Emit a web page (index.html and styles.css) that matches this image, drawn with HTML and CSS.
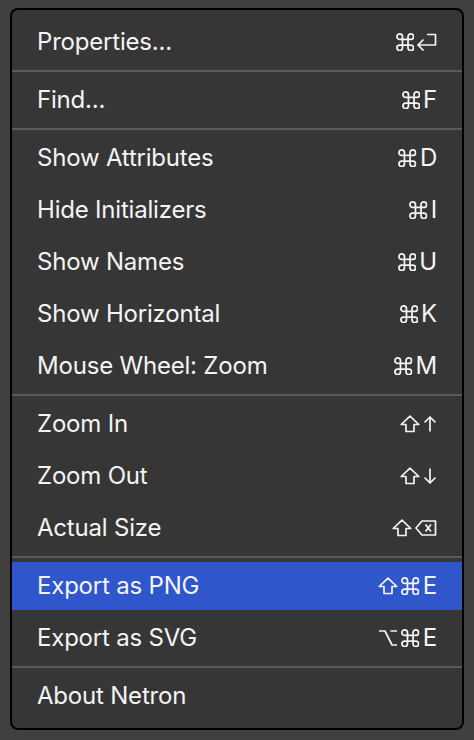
FILE: index.html
```html
<!DOCTYPE html>
<html lang="en">
<head>
  <meta charset="UTF-8">
  <meta name="viewport" content="width=device-width, initial-scale=1.0">
  <title>Netron menu</title>
  <link rel="stylesheet" href="styles.css">
</head>
<body>

<svg class="sprite" xmlns="http://www.w3.org/2000/svg">
  <symbol id="cmd" viewBox="2 2 20 20">
    <path d="M6 9A3 3 0 1 1 9 6V18A3 3 0 1 1 6 15H18A3 3 0 1 1 15 18V6A3 3 0 1 1 18 9Z"/>
  </symbol>
  <symbol id="ret" viewBox="0 0 20 18">
    <path d="M10 1.5H18.5V12H1.5M6.5 6.5L1 12L6.5 17.5"/>
  </symbol>
  <symbol id="shift" viewBox="0 0 20 18">
    <path d="M10 1.2L18.8 9.5H14V16.5H6V9.5H1.2Z"/>
  </symbol>
  <symbol id="up" viewBox="0 0 14 16">
    <path d="M7 1V15.5M1.5 6.5L7 1L12.5 6.5"/>
  </symbol>
  <symbol id="down" viewBox="0 0 14 16">
    <path d="M7 15V0.5M1.5 9.5L7 15L12.5 9.5"/>
  </symbol>
  <symbol id="del" viewBox="0 0 22 16">
    <path d="M7 1H20.5V15H7L1 8Z M10.5 4.5L16 11.5M16 4.5L10.5 11.5"/>
  </symbol>
  <symbol id="opt" viewBox="0 0 20 18">
    <path d="M1 2H7L14 16H19M12.5 2H19"/>
  </symbol>
</svg>

<div class="menu">
  <div class="item"><span>Properties...</span><span class="keys"><svg class="k-cmd"><use href="#cmd"/></svg><svg class="k-ret"><use href="#ret"/></svg></span></div>
  <div class="sep"></div>
  <div class="item"><span>Find...</span><span class="keys"><svg class="k-cmd"><use href="#cmd"/></svg><span>F</span></span></div>
  <div class="sep"></div>
  <div class="item"><span>Show Attributes</span><span class="keys"><svg class="k-cmd"><use href="#cmd"/></svg><span>D</span></span></div>
  <div class="item"><span>Hide Initializers</span><span class="keys"><svg class="k-cmd"><use href="#cmd"/></svg><span>I</span></span></div>
  <div class="item"><span>Show Names</span><span class="keys"><svg class="k-cmd"><use href="#cmd"/></svg><span>U</span></span></div>
  <div class="item"><span>Show Horizontal</span><span class="keys"><svg class="k-cmd"><use href="#cmd"/></svg><span>K</span></span></div>
  <div class="item"><span>Mouse Wheel: Zoom</span><span class="keys"><svg class="k-cmd"><use href="#cmd"/></svg><span>M</span></span></div>
  <div class="sep"></div>
  <div class="item"><span>Zoom In</span><span class="keys"><svg class="k-shift"><use href="#shift"/></svg><svg class="k-arrow"><use href="#up"/></svg></span></div>
  <div class="item"><span>Zoom Out</span><span class="keys"><svg class="k-shift"><use href="#shift"/></svg><svg class="k-arrow"><use href="#down"/></svg></span></div>
  <div class="item"><span>Actual Size</span><span class="keys"><svg class="k-shift"><use href="#shift"/></svg><svg class="k-del"><use href="#del"/></svg></span></div>
  <div class="sep"></div>
  <div class="item active"><span>Export as PNG</span><span class="keys"><svg class="k-shift"><use href="#shift"/></svg><svg class="k-cmd"><use href="#cmd"/></svg><span>E</span></span></div>
  <div class="item"><span>Export as SVG</span><span class="keys"><svg class="k-opt"><use href="#opt"/></svg><svg class="k-cmd"><use href="#cmd"/></svg><span>E</span></span></div>
  <div class="sep"></div>
  <div class="item"><span>About Netron</span></div>
</div>

</body>
</html>
```

FILE: styles.css
```css
body {
  margin: 0;
  background-color: #404040;
  font-family: 'Inter', 'Liberation Sans', sans-serif;
  color: #f4f4f4;
}

.sprite {
  display: none;
}

.menu {
  width: 454px;
  box-sizing: border-box;
  margin: 8px 10px;
  padding: 6px 0;
  background-color: #363636;
  border: 2px solid #000;
  border-radius: 8px;
}

.item {
  display: flex;
  justify-content: space-between;
  align-items: center;
  height: 52px;
  box-sizing: border-box;
  padding: 0 25px;
  border-top: 2px solid transparent;
  border-bottom: 2px solid transparent;
  background-clip: padding-box;
  font-size: 24px;
  line-height: 1;
  letter-spacing: -0.2px;
}

.item.active {
  background-color: #2f57cb;
}

.sep {
  height: 2px;
  margin: 2px 0;
  background-color: #5a5a5a;
}

.keys {
  display: flex;
  align-items: center;
  gap: 3px;
}

.keys svg {
  fill: none;
  stroke: #f4f4f4;
  stroke-width: 1.7;
  stroke-linejoin: round;
}

.k-cmd {
  width: 18.5px;
  height: 18.5px;
  stroke-width: 1.9 !important;
}

.k-ret {
  width: 20px;
  height: 18px;
}

.k-shift {
  width: 20px;
  height: 18px;
}

.k-arrow {
  width: 14px;
  height: 16px;
}

.k-del {
  width: 22px;
  height: 16px;
}

.k-opt {
  width: 20px;
  height: 18px;
}
```
